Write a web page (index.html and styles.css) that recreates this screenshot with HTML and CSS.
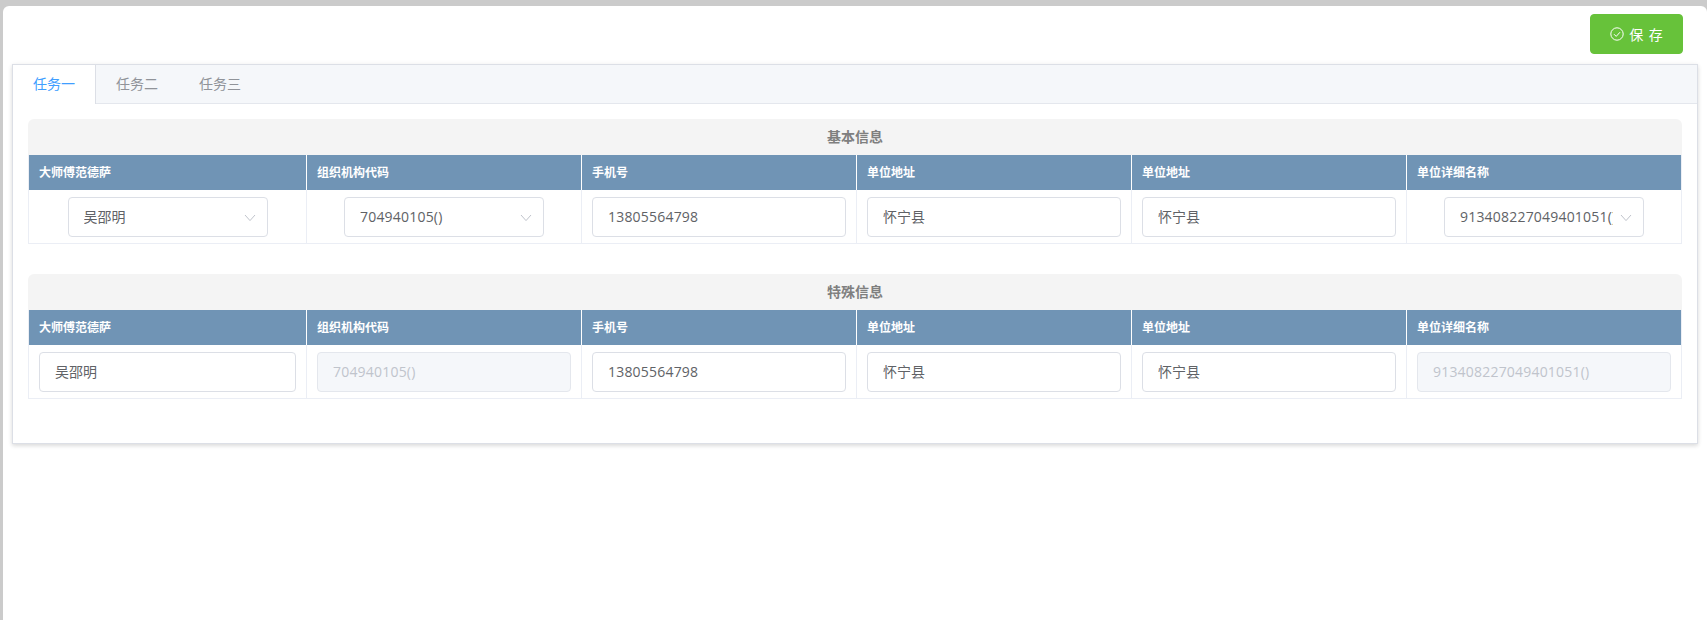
FILE: index.html
```html
<!DOCTYPE html>
<html lang="zh-CN">
<head>
<meta charset="utf-8">
<title>任务</title>
<link rel="stylesheet" href="styles.css">
</head>
<body>
<main class="page">
  <div class="toolbar">
    <button class="save-btn" type="button">
      <svg class="save-icon" viewBox="0 0 14 14" width="14" height="14"><circle cx="7" cy="7" r="6.2" fill="none" stroke="currentColor" stroke-width="1"/><path d="M4 7.2 6.2 9.4 10 5.2" fill="none" stroke="currentColor" stroke-width="1"/></svg>
      <span>保 存</span>
    </button>
  </div>
  <section class="card">
    <div class="tabs">
      <div class="tab tab-active">任务一</div>
      <div class="tab">任务二</div>
      <div class="tab">任务三</div>
    </div>
    <div class="tab-body">
      <div class="block">
        <div class="block-title">基本信息</div>
        <div class="grid grid-head">
          <div class="th">大师傅范德萨</div><div class="th">组织机构代码</div><div class="th">手机号</div><div class="th">单位地址</div><div class="th">单位地址</div><div class="th">单位详细名称</div>
        </div>
        <div class="grid grid-row">
          <div class="td td-center"><div class="select"><input class="field" value="吴邵明" readonly><svg class="chev" viewBox="0 0 12 8" width="12" height="8"><path d="M1 1 6 6.6 11 1" fill="none" stroke="currentColor"/></svg></div></div>
          <div class="td td-center"><div class="select"><input class="field num" value="704940105()" readonly><svg class="chev" viewBox="0 0 12 8" width="12" height="8"><path d="M1 1 6 6.6 11 1" fill="none" stroke="currentColor"/></svg></div></div>
          <div class="td"><input class="field num" value="13805564798" readonly></div>
          <div class="td"><input class="field" value="怀宁县" readonly></div>
          <div class="td"><input class="field" value="怀宁县" readonly></div>
          <div class="td td-center"><div class="select"><input class="field num" value="913408227049401051()" readonly><svg class="chev" viewBox="0 0 12 8" width="12" height="8"><path d="M1 1 6 6.6 11 1" fill="none" stroke="currentColor"/></svg></div></div>
        </div>
      </div>
      <div class="block">
        <div class="block-title">特殊信息</div>
        <div class="grid grid-head">
          <div class="th">大师傅范德萨</div><div class="th">组织机构代码</div><div class="th">手机号</div><div class="th">单位地址</div><div class="th">单位地址</div><div class="th">单位详细名称</div>
        </div>
        <div class="grid grid-row">
          <div class="td"><input class="field" value="吴邵明" readonly></div>
          <div class="td"><input class="field num" value="704940105()" disabled></div>
          <div class="td"><input class="field num" value="13805564798" readonly></div>
          <div class="td"><input class="field" value="怀宁县" readonly></div>
          <div class="td"><input class="field" value="怀宁县" readonly></div>
          <div class="td"><input class="field num" value="913408227049401051()" disabled></div>
        </div>
      </div>
    </div>
  </section>
</main>
</body>
</html>
```
FILE: styles.css
```css
* { box-sizing: border-box; }
html, body { margin: 0; height: 100%; overflow: hidden; }
body {
  background: #cbcbcb;
  padding: 6px 0 0 3px;
  font-family: "Open Sans", "Noto Sans CJK SC", sans-serif;
  font-size: 14px;
  color: #606266;
}
.page {
  background: #fff;
  height: 100%;
  border-radius: 6px 6px 0 0;
  padding: 8px 9px 0 9px;
}
.toolbar { display: flex; justify-content: flex-end; padding-right: 15px; height: 40px; margin-bottom: 10px; }
.save-btn {
  width: 93px; height: 40px;
  background: #67c23a; border: 1px solid #67c23a; border-radius: 4px;
  color: #fff; font: inherit; font-size: 14px; word-spacing: 2px;
  display: flex; align-items: center; justify-content: center; gap: 5px;
  padding: 0;
}
.save-icon { flex: none; }
.card {
  background: #fff;
  border: 1px solid #dcdfe6;
  box-shadow: 0 2px 4px rgba(0,0,0,.12), 0 0 6px rgba(0,0,0,.04);
  height: 380px;
}
.tabs {
  display: flex; height: 39px;
  background: #f5f7fa; border-bottom: 1px solid #e4e7ed;
}
.tab {
  padding: 0 20px; line-height: 38px; color: #909399;
  width: 83px; flex: none;
}
.tab-active {
  background: #fff; color: #409eff;
  height: 39px; border-right: 1px solid #dcdfe6;
}
.tab-body { padding: 15px 15px 0 15px; }
.block { margin-bottom: 30px; }
.block-title {
  height: 36px; line-height: 36px; text-align: center;
  background: #f4f4f4; border-radius: 6px 6px 0 0;
  font-weight: 700; color: #7f7f7f; font-size: 14px;
}
.grid {
  display: grid;
  grid-template-columns: 278px repeat(4, 275px) 1fr;
}
.grid-head {
  height: 35px; background: #7094b5;
  border-left: 1px solid #ebeef5; border-right: 1px solid #ebeef5;
}
.th {
  padding-left: 10px; line-height: 36px;
  color: #fff; font-size: 12px; font-weight: 700;
  border-right: 1px solid #fff;
}
.th:last-child { border-right: 0; }
.grid-row { border: 1px solid #ebeef5; border-top: 0; height: 54px; }
.td {
  padding: 7px 10px 6px 10px;
  border-right: 1px solid #ebeef5;
}
.td:last-child { border-right: 0; }
.td-center { display: flex; justify-content: center; }
.select { position: relative; width: 200px; }
.select .field { padding-right: 30px; }
.chev { position: absolute; right: 12px; top: 17px; color: #c0c4cc; }
.field {
  display: block; width: 100%; height: 40px;
  border: 1px solid #dcdfe6; border-radius: 4px;
  padding: 0 15px 2px; background: #fff; color: #606266;
  font: inherit; font-size: 14px; outline: none;
}
.field.num { letter-spacing: .2px; padding-bottom: 1px; }
.field:disabled { background: #f5f7fa; border-color: #e4e7ed; color: #c0c4cc; }
```
